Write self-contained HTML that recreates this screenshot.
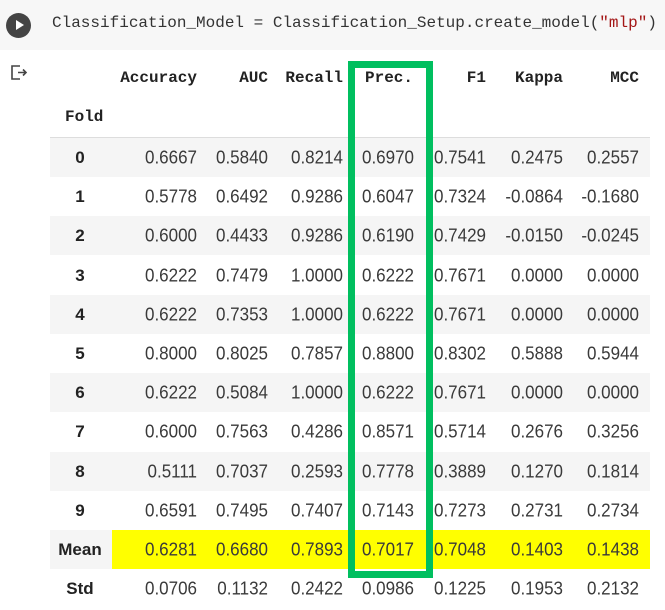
<!DOCTYPE html>
<html><head><style>
body{margin:0;width:665px;height:606px;background:#fff;position:relative;overflow:hidden;font-family:"Liberation Sans",sans-serif}
.code{position:absolute;left:0;top:0;width:665px;height:50px;background:#f7f7f7}
.code span.t{position:absolute;left:52px;top:14px;font-family:"Liberation Mono",monospace;font-size:16px;color:#333;white-space:pre}
.play{position:absolute;left:6px;top:13px;width:25px;height:25px;border-radius:50%;background:#444}
.play:after{content:"";position:absolute;left:10px;top:7px;border-left:8px solid #fff;border-top:5.5px solid transparent;border-bottom:5.5px solid transparent}
.h{position:absolute;font-family:"Liberation Mono",monospace;font-weight:bold;font-size:16px;color:#222;top:69px;text-align:right}
.row{position:absolute;left:50px;width:600px;height:39px}
.c{position:absolute;top:0;line-height:39px;font-size:17px;color:#3a3a3a;text-align:right;transform:scaleY(1.1)}
.i{position:absolute;top:0;line-height:39px;font-size:17px;font-weight:bold;color:#222;width:60px;text-align:center;left:0}
.box{position:absolute;left:348px;top:61px;width:71px;height:503px;border:7px solid #00bf5f}
</style></head><body>
<div class="code"><div class="play"></div><span class="t">Classification_Model = Classification_Setup.create_model(<span style="color:#a31515">"mlp"</span>)</span></div>
<svg style="position:absolute;left:10px;top:64px" width="20" height="18" viewBox="0 0 20 18"><path d="M10 2H2v13h8" fill="none" stroke="#444" stroke-width="1.6"/><path d="M8 8.5h8M13 5.5l3 3-3 3" fill="none" stroke="#444" stroke-width="1.6"/></svg>
<div class="h" style="right:468px">Accuracy</div>
<div class="h" style="right:397px">AUC</div>
<div class="h" style="right:322px">Recall</div>
<div class="h" style="right:252px">Prec.</div>
<div class="h" style="right:179px">F1</div>
<div class="h" style="right:102px">Kappa</div>
<div class="h" style="right:26px">MCC</div>
<div class="h" style="left:65px;top:108px">Fold</div>
<div style="position:absolute;left:50px;top:137px;width:600px;height:1px;background:#ddd"></div>
<div id="t"></div>
<div class="box"></div>
<script>
var d=[["0","0.6667","0.5840","0.8214","0.6970","0.7541","0.2475","0.2557"],
["1","0.5778","0.6492","0.9286","0.6047","0.7324","-0.0864","-0.1680"],
["2","0.6000","0.4433","0.9286","0.6190","0.7429","-0.0150","-0.0245"],
["3","0.6222","0.7479","1.0000","0.6222","0.7671","0.0000","0.0000"],
["4","0.6222","0.7353","1.0000","0.6222","0.7671","0.0000","0.0000"],
["5","0.8000","0.8025","0.7857","0.8800","0.8302","0.5888","0.5944"],
["6","0.6222","0.5084","1.0000","0.6222","0.7671","0.0000","0.0000"],
["7","0.6000","0.7563","0.4286","0.8571","0.5714","0.2676","0.3256"],
["8","0.5111","0.7037","0.2593","0.7778","0.3889","0.1270","0.1814"],
["9","0.6591","0.7495","0.7407","0.7143","0.7273","0.2731","0.2734"],
["Mean","0.6281","0.6680","0.7893","0.7017","0.7048","0.1403","0.1438"],
["Std","0.0706","0.1132","0.2422","0.0986","0.1225","0.1953","0.2132"]];
var r=[197,268,343,414,486,563,639],h="";
d.forEach(function(x,k){var top=138+k*39.2;var bg=(k%2==0)?"#f5f5f5":"#fff";
h+='<div class="row" style="top:'+top+'px;background:'+bg+'">';
if(k==10)h+='<div style="position:absolute;left:62px;top:0;width:538px;height:39px;background:#ffff00"></div>';
h+='<div class="i">'+x[0]+'</div>';
for(var j=1;j<8;j++)h+='<div class="c" style="right:'+(650-r[j-1])+'px">'+x[j]+'</div>';
h+='</div>';});
document.getElementById("t").innerHTML=h;
</script>
</body></html>
